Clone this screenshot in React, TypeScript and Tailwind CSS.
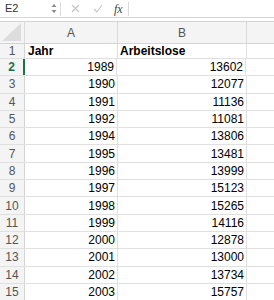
import React from 'react';

const rows: [string, string][] = [
  ['1989', '13602'],
  ['1990', '12077'],
  ['1991', '11136'],
  ['1992', '11081'],
  ['1994', '13806'],
  ['1995', '13481'],
  ['1996', '13999'],
  ['1997', '15123'],
  ['1998', '15265'],
  ['1999', '14116'],
  ['2000', '12878'],
  ['2001', '13000'],
  ['2002', '13734'],
  ['2003', '15757'],
];

function FormulaBar() {
  return (
    <div className="flex h-[18px] items-center border-b border-[#d6d6d6] bg-white text-[11px] text-[#333]">
      <div className="flex w-[60px] items-center justify-between pl-[5px] pr-[3px]">
        <span>E2</span>
        <svg width="6" height="11" viewBox="0 0 6 11">
          <path d="M3 1 L5.5 4 L0.5 4 Z" fill="#8a8a8a" />
          <path d="M3 10 L5.5 7 L0.5 7 Z" fill="#8a8a8a" />
        </svg>
      </div>
      <div className="h-[14px] w-px bg-[#dadada]" />
      <div className="flex w-[67px] items-center pl-[10px]">
        <svg width="9" height="9" viewBox="0 0 9 9" className="mr-[13px]">
          <path d="M1 1 L8 8 M8 1 L1 8" stroke="#c4c4c4" strokeWidth="1.1" />
        </svg>
        <svg width="10" height="9" viewBox="0 0 10 9" className="mr-[11px]">
          <path d="M1 5 L3.8 8 L9 1" stroke="#c4c4c4" strokeWidth="1.1" fill="none" />
        </svg>
        <span className="italic text-[#444]" style={{ fontFamily: '"Liberation Serif", serif', fontSize: 12 }}>
          fx
        </span>
      </div>
      <div className="h-[14px] w-px bg-[#dadada]" />
    </div>
  );
}

export default function App() {
  return (
    <div className="h-[300px] w-[274px] overflow-hidden bg-white" style={{ fontFamily: '"Liberation Sans", Arial, sans-serif' }}>
      <FormulaBar />
      <div className="h-[3px]" />
      {/* column headers */}
      <div className="flex h-[23px] border-y border-[#d4d4d4] bg-[#f4f4f4] text-[12px] text-[#555]">
        <div className="relative w-[25px] border-r border-[#dadada]">
          <svg width="20" height="18" viewBox="0 0 20 18" className="absolute bottom-[2px] right-[2px]">
            <path d="M19 0 L19 18 L0 18 Z" fill="#dcdcdc" />
          </svg>
        </div>
        <div className="flex w-[93px] items-center justify-center border-r border-[#dadada]">A</div>
        <div className="flex w-[129px] items-center justify-center border-r border-[#dadada]">B</div>
        <div className="flex-1" />
      </div>
      {/* row 1 */}
      <div className="flex h-[14px] box-content border-b border-[#e0e0e0] text-[12px] text-black">
        <div className="flex w-[25px] items-center justify-center border-r border-[#d4d4d4] bg-[#f4f4f4] text-[#555]">1</div>
        <div className="flex w-[93px] items-center border-r border-[#e0e0e0] pl-[3px] font-bold">Jahr</div>
        <div className="flex w-[129px] items-center border-r border-[#e0e0e0] pl-[2px] font-bold">Arbeitslose</div>
        <div className="flex-1" />
      </div>
      {rows.map(([year, val], i) => {
        const n = i + 2;
        const sel = n === 2;
        return (
          <div key={n} className="flex h-[17.3px] border-b border-[#e0e0e0] text-[12px] text-black">
            <div
              className={
                sel
                  ? 'flex w-[25px] items-center justify-center border-r-2 border-[#1e7145] bg-[#f4f4f4] font-bold text-[#1e7145]'
                  : 'flex w-[25px] items-center justify-center border-r border-[#d4d4d4] bg-[#f4f4f4] text-[#555]'
              }
            >
              {n}
            </div>
            <div className={sel ? 'flex w-[92px] items-center justify-end border-r border-[#e0e0e0] pr-[2px]' : 'flex w-[93px] items-center justify-end border-r border-[#e0e0e0] pr-[2px]'}>
              {year}
            </div>
            <div className="flex w-[129px] items-center justify-end border-r border-[#e0e0e0] pr-[2px]">{val}</div>
            <div className="flex-1" />
          </div>
        );
      })}
    </div>
  );
}
